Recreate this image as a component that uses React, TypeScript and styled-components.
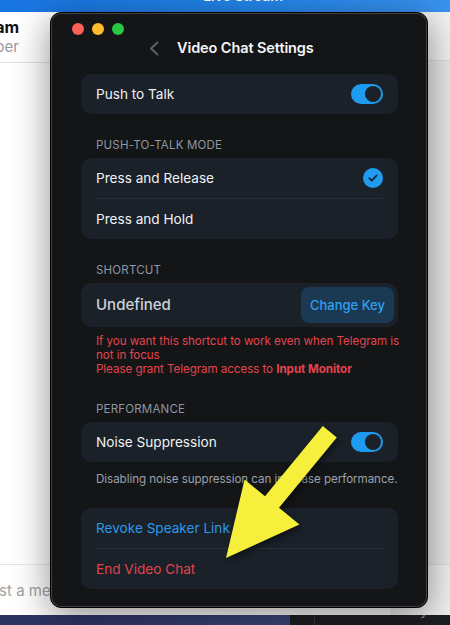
import React, { FC } from 'react';
import styled, { createGlobalStyle } from 'styled-components';

const GlobalStyle = createGlobalStyle`
    html, body {
        margin: 0;
        padding: 0;
        width: 450px;
        height: 625px;
        overflow: hidden;
        background: #ffffff;
    }
    * {
        box-sizing: border-box;
    }
`;

const Stage = styled.div`
    position: relative;
    width: 450px;
    height: 625px;
    overflow: hidden;
    font-family: Inter, 'Noto Sans', sans-serif;
`;

/* ---------- the app behind the settings window ---------- */

const Backdrop = styled.div`
    display: flex;
    flex-direction: column;
    width: 100%;
    height: 100%;
`;

const TopBar = styled.div`
    height: 12px;
    flex-shrink: 0;
    overflow: hidden;
    display: flex;
    justify-content: center;
    background: linear-gradient(90deg, #1874e0 0%, #2487ec 60%, #3a93ef 100%);
`;

const TopBarTitle = styled.div`
    margin-top: -12px;
    margin-left: 36px;
    font-size: 14px;
    font-weight: 600;
    line-height: 16px;
    color: #ffffff;
`;

const Body = styled.div`
    flex: 1;
    display: flex;
    min-height: 0;
`;

const ChatPane = styled.div`
    width: 390px;
    display: flex;
    flex-direction: column;
    background: #ffffff;
`;

const ChatHeader = styled.div`
    height: 51px;
    flex-shrink: 0;
    display: flex;
    flex-direction: column;
    justify-content: center;
    gap: 2px;
    border-bottom: 1px solid #e3e3e3;
    white-space: nowrap;
`;

const ChatName = styled.div`
    margin-left: -73px;
    font-size: 16px;
    font-weight: 700;
    line-height: 18px;
    color: #111111;
`;

const ChatStatus = styled.div`
    margin-left: -50px;
    font-size: 15px;
    line-height: 18px;
    color: #9a9a9a;
`;

const ChatSpace = styled.div`
    flex: 1;
    border-bottom: 1px solid #e6e6e6;
`;

const Composer = styled.div`
    height: 50px;
    flex-shrink: 0;
    display: flex;
    align-items: center;
    white-space: nowrap;
`;

const Placeholder = styled.span`
    margin-left: -60px;
    font-size: 15px;
    color: #a2a2a2;
`;

const SidePane = styled.div`
    flex: 1;
    display: flex;
    flex-direction: column;
    background: #e9e9e9;
`;

const SideHeader = styled.div`
    height: 49px;
    flex-shrink: 0;
    background: #f2f2f2;
    border-bottom: 1px solid #dcdcdc;
`;

const SideSpace = styled.div`
    flex: 1;
    border-bottom: 1px solid #dcdcdc;
`;

const SideFooter = styled.div`
    height: 50px;
    flex-shrink: 0;
    background: #f0f0f0;
`;

const BottomStrip = styled.div`
    height: 10px;
    flex-shrink: 0;
    display: flex;
    overflow: hidden;
`;

const StreamPreview = styled.div`
    width: 290px;
    background: linear-gradient(90deg, #2b3260 0%, #343d70 60%, #3c4679 100%);
`;

const StatsPanel = styled.div`
    flex: 1;
    display: flex;
    align-items: flex-start;
    background: #1d1e21;
    white-space: nowrap;
`;

const StatsDivider = styled.div`
    width: 25px;
    height: 100%;
    border-right: 1px solid #3a3b3f;
`;

const StatsTitle = styled.span`
    margin-top: -14px;
    margin-left: 11px;
    font-size: 15px;
    line-height: 18px;
    color: #8c8c8c;
`;

/* ---------- settings window ---------- */

const Window = styled.div`
    position: absolute;
    left: 50px;
    top: 12px;
    width: 378px;
    height: 596px;
    display: flex;
    flex-direction: column;
    background: #141517;
    border: 1px solid #000000;
    border-radius: 11px;
    box-shadow: inset 0 0 0 1px #3f4144, 0 8px 36px rgba(0, 0, 0, 0.45);
    color: #f2f3f5;
`;

const TitleBar = styled.div`
    height: 61px;
    flex-shrink: 0;
    display: flex;
    align-items: flex-start;
    padding: 10px 0 0 21px;
`;

const Lights = styled.div`
    display: flex;
    gap: 8px;
`;

const Light = styled.span<{ $color: string }>`
    width: 12px;
    height: 12px;
    border-radius: 50%;
    background: ${({ $color }) => $color};
`;

const Nav = styled.div`
    display: flex;
    align-items: center;
    height: 18px;
    margin: 16px 0 0 25px;
    gap: 18px;
`;

const Title = styled.h1`
    margin: 0;
    font-size: 14.5px;
    font-weight: 600;
    line-height: 18px;
    letter-spacing: -0.1px;
    color: #f4f5f6;
`;

const Content = styled.div`
    flex: 1;
    display: flex;
    flex-direction: column;
    padding: 0 29px 0 30px;
`;

const Card = styled.div<{ $top?: number }>`
    margin-top: ${({ $top }) => $top ?? 0}px;
    background: #1a2129;
    border-radius: 10px;
    overflow: hidden;
`;

const Row = styled.div<{ $tall?: boolean }>`
    height: ${({ $tall }) => ($tall ? 44 : 40)}px;
    display: flex;
    align-items: center;
    justify-content: space-between;
    padding: 0 15px;
`;

const RowDivider = styled.div`
    height: 1px;
    margin: 0 15px;
    background: #243039;
`;

const Label = styled.span<{ $tone?: 'default' | 'muted' | 'link' | 'danger' }>`
    font-size: 13.6px;
    line-height: 18px;
    color: ${({ $tone }) =>
        $tone === 'muted' ? '#cdd2d8' : $tone === 'link' ? '#2c99ea' : $tone === 'danger' ? '#e2434d' : '#f1f2f4'};
`;

const ValueLabel = styled(Label)`
    font-size: 15px;
    font-weight: 500;
`;

const SectionLabel = styled.div<{ $top: number }>`
    margin: ${({ $top }) => $top}px 0 6px;
    padding: 0 15px;
    font-size: 11.5px;
    line-height: 14px;
    letter-spacing: 0.2px;
    text-transform: uppercase;
    color: #8e98a4;
`;

const Note = styled.div<{ $top: number; $danger?: boolean }>`
    margin-top: ${({ $top }) => $top}px;
    padding: 0 0 0 15px;
    margin-right: -4px;
    font-size: 11.6px;
    line-height: 14px;
    letter-spacing: -0.05px;
    color: ${({ $danger }) => ($danger ? '#e3444e' : '#9aa2ab')};

    b {
        font-weight: 700;
    }
`;

const Toggle = styled.span<{ $on: boolean }>`
    position: relative;
    width: 32px;
    height: 20px;
    border-radius: 10px;
    background: ${({ $on }) => ($on ? '#1e9bf0' : '#3a434d')};

    &::after {
        content: '';
        position: absolute;
        top: 2px;
        left: ${({ $on }) => ($on ? 14 : 2)}px;
        width: 16px;
        height: 16px;
        border-radius: 50%;
        background: #1a2129;
    }
`;

const Check = styled.span`
    width: 20px;
    height: 20px;
    border-radius: 50%;
    background: #1f9cf0;
    display: flex;
    align-items: center;
    justify-content: center;
`;

const KeyButton = styled.button`
    width: 93px;
    height: 36px;
    margin-right: -11px;
    border: none;
    border-radius: 8px;
    background: #1b3953;
    color: #2f9ff2;
    font-family: inherit;
    font-size: 13px;
    font-weight: 500;
`;

const Overlay = styled.svg`
    position: absolute;
    left: 0;
    top: 0;
    pointer-events: none;
    filter: drop-shadow(2px 3px 3px rgba(0, 0, 0, 0.45));
`;

const Chevron: FC = () => (
    <svg width="10" height="15" viewBox="0 0 10 15">
        <path d="M8.5 1.5 L2 7.5 L8.5 13.5" fill="none" stroke="#5d6268" strokeWidth="2" strokeLinecap="round" strokeLinejoin="round" />
    </svg>
);

const CheckMark: FC = () => (
    <Check>
        <svg width="10" height="8" viewBox="0 0 10 8">
            <path d="M1.2 4.2 L3.8 6.6 L8.8 1.4" fill="none" stroke="#16202a" strokeWidth="1.6" strokeLinecap="round" strokeLinejoin="round" />
        </svg>
    </Check>
);

const App: FC = () => (
    <Stage>
        <GlobalStyle />
        <Backdrop>
            <TopBar>
                <TopBarTitle>Live Stream</TopBarTitle>
            </TopBar>
            <Body>
                <ChatPane>
                    <ChatHeader>
                        <ChatName>Live Stream</ChatName>
                        <ChatStatus>1 member</ChatStatus>
                    </ChatHeader>
                    <ChatSpace />
                    <Composer>
                        <Placeholder>Broadcast a message...</Placeholder>
                    </Composer>
                </ChatPane>
                <SidePane>
                    <SideHeader />
                    <SideSpace />
                    <SideFooter />
                </SidePane>
            </Body>
            <BottomStrip>
                <StreamPreview />
                <StatsPanel>
                    <StatsDivider />
                    <StatsTitle>Views Per Day</StatsTitle>
                </StatsPanel>
            </BottomStrip>
        </Backdrop>

        <Window>
            <TitleBar>
                <Lights>
                    <Light $color="#fe5f57" />
                    <Light $color="#febc2e" />
                    <Light $color="#28c840" />
                </Lights>
                <Nav>
                    <Chevron />
                    <Title>Video Chat Settings</Title>
                </Nav>
            </TitleBar>

            <Content>
                <Card>
                    <Row>
                        <Label>Push to Talk</Label>
                        <Toggle $on />
                    </Row>
                </Card>

                <SectionLabel $top={24}>Push-to-Talk Mode</SectionLabel>
                <Card>
                    <Row>
                        <Label>Press and Release</Label>
                        <CheckMark />
                    </Row>
                    <RowDivider />
                    <Row>
                        <Label>Press and Hold</Label>
                    </Row>
                </Card>

                <SectionLabel $top={24}>Shortcut</SectionLabel>
                <Card>
                    <Row $tall>
                        <ValueLabel $tone="muted">Undefined</ValueLabel>
                        <KeyButton>Change Key</KeyButton>
                    </Row>
                </Card>
                <Note $top={7} $danger>
                    If you want this shortcut to work even when Telegram is not in focus
                    <br />
                    Please grant Telegram access to <b>Input Monitor</b>
                </Note>

                <SectionLabel $top={26}>Performance</SectionLabel>
                <Card>
                    <Row>
                        <Label>Noise Suppression</Label>
                        <Toggle $on />
                    </Row>
                </Card>
                <Note $top={10}>Disabling noise suppression can increase performance.</Note>

                <Card $top={22}>
                    <Row>
                        <Label $tone="link">Revoke Speaker Link</Label>
                    </Row>
                    <RowDivider />
                    <Row>
                        <Label $tone="danger">End Video Chat</Label>
                    </Row>
                </Card>
            </Content>
        </Window>

        <Overlay width="450" height="625" viewBox="0 0 450 625">
            <polygon
                points="226,558 244.6,479.5 265,496.3 322.8,426 336.8,437.4 279,507.7 299.4,524.5"
                fill="#f6ef3c"
            />
        </Overlay>
    </Stage>
);

export default App;
